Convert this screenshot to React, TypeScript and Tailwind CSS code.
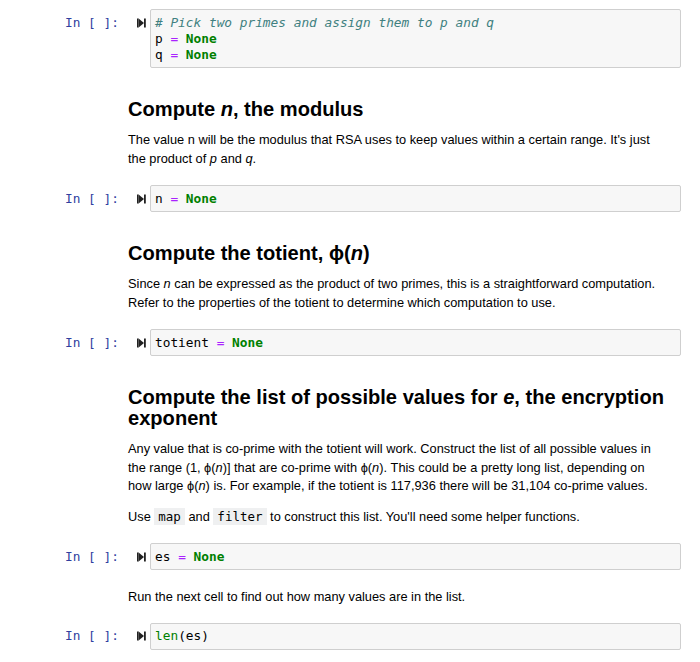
import React from 'react'

const mono = { fontFamily: '"DejaVu Sans Mono", monospace' }

function RunIcon() {
  return (
    <svg width="9" height="10" viewBox="0 0 9 10" className="mt-[3px]">
      <rect x="0" y="0.5" width="1.6" height="9" fill="#222" />
      <path d="M1.6 0.5 L7 5 L1.6 9.5 Z" fill="#222" />
      <rect x="7" y="0.5" width="1.8" height="9" fill="#222" />
    </svg>
  )
}

function CodeCell({ children, className = '' }: { children: React.ReactNode; className?: string }) {
  return (
    <div className={`flex items-start ${className}`}>
      <div
        className="w-[133px] shrink-0 pl-[65px] pt-[5.5px] text-[12.8px] leading-[16px] text-[#303f9f]"
        style={mono}
      >
        In [ ]:
      </div>
      <div className="w-[17px] shrink-0 pt-[5.5px] flex justify-start pl-[4px]">
        <RunIcon />
      </div>
      <div
        className="flex-1 border border-[#cfcfcf] bg-[#f7f7f7] rounded-[2px] px-[4px] py-[4.5px] text-[12.8px] leading-[16px] text-[#000] whitespace-pre"
        style={mono}
      >
        {children}
      </div>
    </div>
  )
}

const Eq = () => <span className="text-[#aa22ff]">=</span>
const None = () => <span className="text-[#008000] font-bold">None</span>

function Heading({ children, className = '' }: { children: React.ReactNode; className?: string }) {
  return (
    <h2 className={`ml-[128px] w-[545px] text-[20.1px] leading-[21px] font-bold text-black ${className}`}>
      {children}
    </h2>
  )
}

function Para({ children, className = '' }: { children: React.ReactNode; className?: string }) {
  return (
    <p className={`ml-[128px] w-[540px] text-[12.8px] leading-[18.5px] text-black ${className}`}>
      {children}
    </p>
  )
}

const Inline = ({ children }: { children: React.ReactNode }) => (
  <code className="bg-[#eff0f1] px-[4px] py-[1px] text-[12.5px]" style={mono}>
    {children}
  </code>
)

export default function App() {
  return (
    <div
      className="w-[700px] h-[662px] bg-white pt-[9px] pr-[19px] overflow-hidden"
      style={{ fontFamily: '"Liberation Sans", Arial, sans-serif' }}
    >
      <CodeCell>
        <span className="italic text-[#408080]"># Pick two primes and assign them to p and q</span>
        {'\n'}p <Eq /> <None />
        {'\n'}q <Eq /> <None />
      </CodeCell>

      <Heading className="mt-[31px]">
        Compute <i>n</i>, the modulus
      </Heading>
      <Para className="mt-[11px]">
        The value n will be the modulus that RSA uses to keep values within a certain range. It's just the product of{' '}
        <i>p</i> and <i>q</i>.
      </Para>

      <CodeCell className="mt-[17px]">
        n <Eq /> <None />
      </CodeCell>

      <Heading className="mt-[31px]">
        Compute the totient, ϕ(<i>n</i>)
      </Heading>
      <Para className="mt-[11px]">
        Since <i>n</i> can be expressed as the product of two primes, this is a straightforward computation. Refer to the
        properties of the totient to determine which computation to use.
      </Para>

      <CodeCell className="mt-[17px]">
        totient <Eq /> <None />
      </CodeCell>

      <Heading className="mt-[31px]">
        Compute the list of possible values for <i>e</i>, the encryption exponent
      </Heading>
      <Para className="mt-[11px]">
        Any value that is co-prime with the totient will work. Construct the list of all possible values in the range (1,
        ϕ(<i>n</i>)] that are co-prime with ϕ(<i>n</i>). This could be a pretty long list, depending on how large ϕ(
        <i>n</i>) is. For example, if the totient is 117,936 there will be 31,104 co-prime values.
      </Para>
      <Para className="mt-[12px]">
        Use <Inline>map</Inline> and <Inline>filter</Inline> to construct this list. You'll need some helper functions.
      </Para>

      <CodeCell className="mt-[17px]">
        es <Eq /> <None />
      </CodeCell>

      <Para className="mt-[18px]">Run the next cell to find out how many values are in the list.</Para>

      <CodeCell className="mt-[16px]">
        <span className="text-[#008000]">len</span>(es)
      </CodeCell>
    </div>
  )
}
